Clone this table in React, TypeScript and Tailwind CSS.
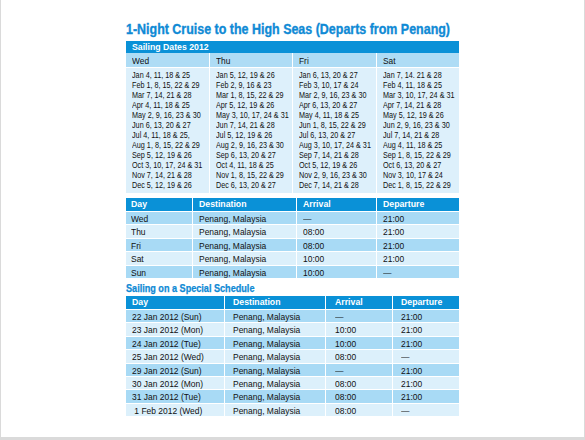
const SAILING_DATES = [
  {
    day: "Wed",
    dates: [
      "Jan 4, 11, 18 & 25", "Feb 1, 8, 15, 22 & 29", "Mar 7, 14, 21 & 28", "Apr 4, 11, 18 & 25",
      "May 2, 9, 16, 23 & 30", "Jun 6, 13, 20 & 27", "Jul 4, 11, 18 & 25,", "Aug 1, 8, 15, 22 & 29",
      "Sep 5, 12, 19 & 26", "Oct 3, 10, 17, 24 & 31", "Nov 7, 14, 21 & 28", "Dec 5, 12, 19 & 26",
    ],
  },
  {
    day: "Thu",
    dates: [
      "Jan 5, 12, 19 & 26", "Feb 2, 9, 16 & 23", "Mar 1, 8, 15, 22 & 29", "Apr 5, 12, 19 & 26",
      "May 3, 10, 17, 24 & 31", "Jun 7, 14, 21 & 28", "Jul 5, 12, 19 & 26", "Aug 2, 9, 16, 23 & 30",
      "Sep 6, 13, 20 & 27", "Oct 4, 11, 18 & 25", "Nov 1, 8, 15, 22 & 29", "Dec 6, 13, 20 & 27",
    ],
  },
  {
    day: "Fri",
    dates: [
      "Jan 6, 13, 20 & 27", "Feb 3, 10, 17 & 24", "Mar 2, 9, 16, 23 & 30", "Apr 6, 13, 20 & 27",
      "May 4, 11, 18 & 25", "Jun 1, 8, 15, 22 & 29", "Jul 6, 13, 20 & 27", "Aug 3, 10, 17, 24 & 31",
      "Sep 7, 14, 21 & 28", "Oct 5, 12, 19 & 26", "Nov 2, 9, 16, 23 & 30", "Dec 7, 14, 21 & 28",
    ],
  },
  {
    day: "Sat",
    dates: [
      "Jan 7, 14. 21 & 28", "Feb 4, 11, 18 & 25", "Mar 3, 10, 17, 24 & 31", "Apr 7, 14, 21 & 28",
      "May 5, 12, 19 & 26", "Jun 2, 9, 16, 23 & 30", "Jul 7, 14, 21 & 28", "Aug 4, 11, 18 & 25",
      "Sep 1, 8, 15, 22 & 29", "Oct 6, 13, 20 & 27", "Nov 3, 10, 17 & 24", "Dec 1, 8, 15, 22 & 29",
    ],
  },
];

const WEEKLY = [
  ["Wed", "Penang, Malaysia", "—", "21:00"],
  ["Thu", "Penang, Malaysia", "08:00", "21:00"],
  ["Fri", "Penang, Malaysia", "08:00", "21:00"],
  ["Sat", "Penang, Malaysia", "10:00", "21:00"],
  ["Sun", "Penang, Malaysia", "10:00", "—"],
];

const SPECIAL = [
  ["22 Jan 2012 (Sun)", "Penang, Malaysia", "—", "21:00"],
  ["23 Jan 2012 (Mon)", "Penang, Malaysia", "10:00", "21:00"],
  ["24 Jan 2012 (Tue)", "Penang, Malaysia", "10:00", "21:00"],
  ["25 Jan 2012 (Wed)", "Penang, Malaysia", "08:00", "—"],
  ["29 Jan 2012 (Sun)", "Penang, Malaysia", "—", "21:00"],
  ["30 Jan 2012 (Mon)", "Penang, Malaysia", "08:00", "21:00"],
  ["31 Jan 2012 (Tue)", "Penang, Malaysia", "08:00", "21:00"],
  ["\u00a01 Feb 2012 (Wed)", "Penang, Malaysia", "08:00", "—"],
];

const HEADS = ["Day", "Destination", "Arrival", "Departure"];

// the source uses a condensed face; squeeze Liberation Sans to match its widths
function Squeeze({ children, className = "scale-x-[0.89]" }: { children: React.ReactNode; className?: string }) {
  return <span className={`inline-block origin-left whitespace-nowrap ${className}`}>{children}</span>;
}

function ScheduleTable({ rows, cols, pads }: { rows: string[][]; cols: string; pads: string[] }) {
  return (
    <div className={`grid ${cols} gap-px`}>
      {HEADS.map((h, i) => (
        <div
          key={h}
          className={`h-[13px] bg-[#0a91d7] text-white font-bold text-[9px] leading-[13px] ${pads[i]}`}
        >
          <Squeeze className="scale-x-[0.97]">{h}</Squeeze>
        </div>
      ))}
      {rows.map((row, r) =>
        row.map((cell, i) => (
          <div
            key={`${r}-${i}`}
            className={`h-[12.4px] text-[9.5px] leading-[13px] text-[#111] ${pads[i]} ${
              r % 2 === 0 ? "bg-[#a8daf5]" : "bg-[#dcf0fb]"
            }`}
          >
            <Squeeze>{cell}</Squeeze>
          </div>
        ))
      )}
    </div>
  );
}

export default function App() {
  return (
    <div className="w-[585px] h-[440px] bg-white border-x border-b-[3px] border-[#dadada] font-['Liberation_Sans',Arial,sans-serif]">
      <div className="w-[333px] mx-auto pt-[22px]">
        {/* Title */}
        <h1 className="text-[14px] leading-[14px] font-bold text-[#0f8ad5] [-webkit-text-stroke:0.35px_#0f8ad5]">
          <Squeeze className="scale-x-[0.89]">1-Night Cruise to the High Seas (Departs from Penang)</Squeeze>
        </h1>

        {/* Sailing dates */}
        <div className="mt-[5px]">
          <div className="h-[12px] bg-[#0a91d7] text-white font-bold text-[9px] leading-[12px] pl-[6px]">
            <Squeeze className="scale-x-[0.97]">Sailing Dates 2012</Squeeze>
          </div>
          <div className="grid grid-cols-4 gap-px">
            {SAILING_DATES.map((col) => (
              <div key={col.day} className="flex flex-col gap-px">
                <div className="h-[14px] bg-[#aedcf5] text-[9.5px] leading-[15px] text-[#111] pl-[6px]">
                  <Squeeze className="scale-x-[0.88]">{col.day}</Squeeze>
                </div>
                <div className="h-[125px] bg-[#ddf0fb] pt-[2px] pl-[6px]">
                  {col.dates.map((d) => (
                    <p key={d} className="h-[10px] text-[8.5px] leading-[10px] text-[#111]">
                      <Squeeze className="scale-x-[0.85]">{d}</Squeeze>
                    </p>
                  ))}
                </div>
              </div>
            ))}
          </div>
        </div>

        {/* Weekly schedule */}
        <div className="mt-[5px]">
          <ScheduleTable
            rows={WEEKLY}
            cols="grid-cols-[66px_103px_79px_82px]"
            pads={["pl-[5px]", "pl-[6px]", "pl-[6px]", "pl-[6px]"]}
          />
        </div>

        {/* Special schedule */}
        <h2 className="mt-[6px] mb-[2px] text-[10px] leading-[10px] font-bold text-[#0f8ad5] [-webkit-text-stroke:0.25px_#0f8ad5]">
          <Squeeze className="scale-x-[0.91]">Sailing on a Special Schedule</Squeeze>
        </h2>
        <ScheduleTable
          rows={SPECIAL}
          cols="grid-cols-[98px_100px_66px_66px]"
          pads={["pl-[6px]", "pl-[8px]", "pl-[9px]", "pl-[8px]"]}
        />
      </div>
    </div>
  );
}
